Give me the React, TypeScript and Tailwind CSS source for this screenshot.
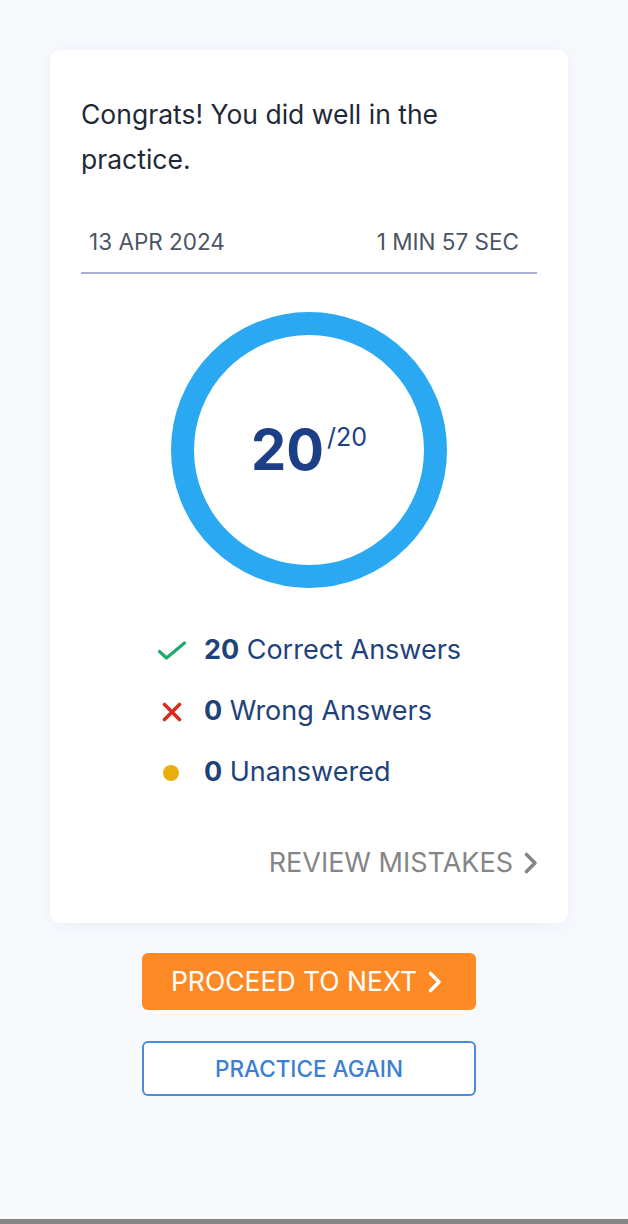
import React from "react";

function Chevron({ className }: { className?: string }) {
  return (
    <svg viewBox="0 0 24 24" className={className} fill="none" stroke="currentColor" strokeWidth={3.6} strokeLinecap="round" strokeLinejoin="round">
      <path d="M7.5 3.5l8.5 8.5-8.5 8.5" />
    </svg>
  );
}

export default function App() {
  return (
    <div className="min-h-[1224px] bg-[#f7f9fd] flex flex-col" style={{ fontFamily: "Inter, 'Noto Sans', sans-serif" }}>
      <div className="pl-[50px] pt-[50px] flex-1">
        <div className="w-[518px] bg-white rounded-[10px] shadow-[0_2px_16px_rgba(120,140,200,0.10)] px-[31px] pt-[42px] pb-[44px]">
          <p className="text-[26.5px] leading-[45px] text-[#1f2937] pr-[60px]">Congrats! You did well in the practice.</p>
          <div className="mt-[46px] flex justify-between pl-[8px] pr-[18px] pb-[16px] border-b-[2px] border-[#a9aedb] text-[22.5px] leading-[28px] text-[#4b5563]">
            <span>13 APR 2024</span>
            <span>1 MIN 57 SEC</span>
          </div>
          <div className="flex justify-center pt-[38px]">
            <div className="w-[276px] h-[276px] rounded-full border-[23px] border-[#2aa8f2] flex items-center justify-center">
              <div className="flex items-start text-[#1c3f86] mt-[0px]">
                <span className="text-[56px] font-bold leading-[56px]">20</span>
                <span className="text-[25px] leading-[25px] mt-[3px] ml-[3px]">/20</span>
              </div>
            </div>
          </div>
          <div className="flex justify-center pt-[32px]">
            <div className="flex flex-col text-[27px] text-[#1f427a]">
              <div className="h-[61px] flex items-center">
                <div className="w-[47px] flex items-center">
                  <svg viewBox="0 0 30 24" className="w-[30px] h-[24px]" fill="none" stroke="#1fab6b" strokeWidth={3.2} strokeLinecap="round" strokeLinejoin="round">
                    <path d="M2.5 12.5l7 6.5L27.5 4" />
                  </svg>
                </div>
                <span><b className="font-bold">20</b> Correct Answers</span>
              </div>
              <div className="h-[61px] flex items-center">
                <div className="w-[47px] flex items-center pl-[5px]">
                  <svg viewBox="0 0 20 20" className="w-[20px] h-[20px]" fill="none" stroke="#db2a22" strokeWidth={3.6} strokeLinecap="round">
                    <path d="M2.5 2.5l15 15M17.5 2.5l-15 15" />
                  </svg>
                </div>
                <span><b className="font-bold">0</b> Wrong Answers</span>
              </div>
              <div className="h-[61px] flex items-center">
                <div className="w-[47px] flex items-center pl-[6px]">
                  <div className="w-[16px] h-[16px] rounded-full bg-[#e8ae0e]" />
                </div>
                <span><b className="font-bold">0</b> Unanswered</span>
              </div>
            </div>
          </div>
          <div className="flex justify-end items-center pt-[44px] text-[27px] leading-[32px] text-[#858585] mr-[-6px]">
            <span>REVIEW MISTAKES</span>
            <Chevron className="w-[24px] h-[24px] ml-[6px]" />
          </div>
        </div>
        <div className="w-[518px] flex flex-col items-center pt-[30px]">
          <button className="w-[334px] h-[57px] rounded-[6px] bg-[#fd8a24] text-white text-[26.5px] flex items-center justify-center">
            <span>PROCEED TO NEXT</span>
            <Chevron className="w-[24px] h-[24px] ml-[6px]" />
          </button>
          <button className="mt-[31px] w-[334px] h-[55px] rounded-[6px] border-[2px] border-[#4a8cd9] bg-white text-[#3c7fd2] text-[22.5px] font-medium flex items-center justify-center">
            PRACTICE AGAIN
          </button>
        </div>
      </div>
      <div className="h-[5px] bg-[#858585]" />
    </div>
  );
}
